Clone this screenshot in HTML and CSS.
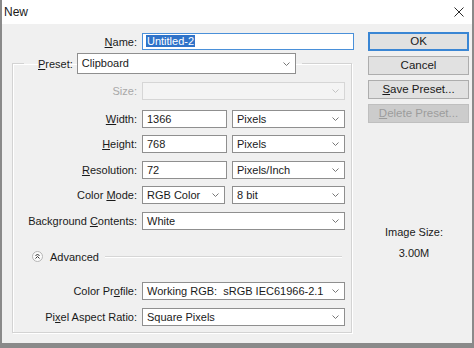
FILE: index.html
```html
<!DOCTYPE html>
<html>
<head>
<meta charset="utf-8">
<link rel="stylesheet" href="styles.css">
</head>
<body>
<div class="window">
  <div class="titlebar">
    <span class="title">New</span>
    <svg class="close" width="10" height="10" viewBox="0 0 10 10"><path d="M0.5 0.5 L9.5 9.5 M9.5 0.5 L0.5 9.5" stroke="#2b2b2b" stroke-width="1" fill="none"/></svg>
  </div>
  <div class="client">
    <div class="main">
      <div class="name-row">
        <span class="lbl"><u>N</u>ame:</span>
        <div class="field name-field"><span class="selected">Untitled-2</span></div>
      </div>
      <fieldset class="group">
        <legend class="legend">
          <span class="legend-lbl"><u>P</u>reset:</span>
          <div class="field select preset"><span>Clipboard</span><svg width="7" height="4" viewBox="0 0 7 4"><path d="M0.5 0.5 L3.5 3.5 L6.5 0.5" fill="none" stroke="#777"/></svg></div>
        </legend>
        <div class="grid">
          <span class="lbl disabled first">Size:</span>
          <div class="field select wide is-disabled first"><span></span><svg width="7" height="4" viewBox="0 0 7 4"><path d="M0.5 0.5 L3.5 3.5 L6.5 0.5" fill="none" stroke="#c4c4c4"/></svg></div>

          <span class="lbl"><u>W</u>idth:</span>
          <div class="field">1366</div>
          <div class="field select"><span>Pixels</span><svg width="7" height="4" viewBox="0 0 7 4"><path d="M0.5 0.5 L3.5 3.5 L6.5 0.5" fill="none" stroke="#777"/></svg></div>

          <span class="lbl"><u>H</u>eight:</span>
          <div class="field">768</div>
          <div class="field select"><span>Pixels</span><svg width="7" height="4" viewBox="0 0 7 4"><path d="M0.5 0.5 L3.5 3.5 L6.5 0.5" fill="none" stroke="#777"/></svg></div>

          <span class="lbl"><u>R</u>esolution:</span>
          <div class="field">72</div>
          <div class="field select"><span>Pixels/Inch</span><svg width="7" height="4" viewBox="0 0 7 4"><path d="M0.5 0.5 L3.5 3.5 L6.5 0.5" fill="none" stroke="#777"/></svg></div>

          <span class="lbl">Color <u>M</u>ode:</span>
          <div class="field select narrow"><span>RGB Color</span><svg width="7" height="4" viewBox="0 0 7 4"><path d="M0.5 0.5 L3.5 3.5 L6.5 0.5" fill="none" stroke="#777"/></svg></div>
          <div class="field select"><span>8 bit</span><svg width="7" height="4" viewBox="0 0 7 4"><path d="M0.5 0.5 L3.5 3.5 L6.5 0.5" fill="none" stroke="#777"/></svg></div>

          <span class="lbl">Background <u>C</u>ontents:</span>
          <div class="field select wide"><span>White</span><svg width="7" height="4" viewBox="0 0 7 4"><path d="M0.5 0.5 L3.5 3.5 L6.5 0.5" fill="none" stroke="#777"/></svg></div>
        </div>

        <div class="advanced">
          <svg class="adv-icon" width="11" height="11" viewBox="0 0 11 11"><circle cx="5.5" cy="5.5" r="5" fill="#fafafa" stroke="#b5b5b5"/><path d="M3.5 5 L5.5 3 L7.5 5 M3.5 7.5 L5.5 5.5 L7.5 7.5" fill="none" stroke="#333" stroke-width="1"/></svg>
          <span class="adv-text">Advanced</span>
          <span class="adv-line"></span>
        </div>

        <div class="grid grid-adv">
          <span class="lbl">Color Pr<u>o</u>file:</span>
          <div class="field select wide"><span>Working RGB:&nbsp; sRGB IEC61966-2.1</span><svg width="7" height="4" viewBox="0 0 7 4"><path d="M0.5 0.5 L3.5 3.5 L6.5 0.5" fill="none" stroke="#777"/></svg></div>

          <span class="lbl">Pi<u>x</u>el Aspect Ratio:</span>
          <div class="field select wide"><span>Square Pixels</span><svg width="7" height="4" viewBox="0 0 7 4"><path d="M0.5 0.5 L3.5 3.5 L6.5 0.5" fill="none" stroke="#777"/></svg></div>
        </div>
      </fieldset>
    </div>
    <div class="side">
      <div class="btn default">OK</div>
      <div class="btn">Cancel</div>
      <div class="btn"><u>S</u>ave Preset...</div>
      <div class="btn disabled-btn"><u>D</u>elete Preset...</div>
      <div class="imgsize">
        <div>Image Size:</div>
        <div class="imgsize-val">3.00M</div>
      </div>
    </div>
  </div>
</div>
</body>
</html>
```

FILE: styles.css
```css
* { box-sizing: border-box; }
html, body { margin: 0; padding: 0; }
body {
  width: 474px;
  height: 348px;
  overflow: hidden;
  font-family: "Liberation Sans", Arial, sans-serif;
  font-size: 11px;
  color: #1a1a1a;
  background: #8c8c8c;
}
u { text-decoration: underline; text-underline-offset: 1px; }

.window {
  width: 474px;
  height: 348px;
  border-left: 2px solid #8a8a8a;
  border-right: 2px solid #8a8a8a;
  border-bottom: 5px solid #8a8a8a;
  display: flex;
  flex-direction: column;
  background: #f0f0f0;
}

.titlebar {
  height: 24px;
  background: #ffffff;
  display: flex;
  align-items: center;
  justify-content: space-between;
  padding: 0 8px 0 2px;
}
.title { font-size: 12px; color: #1a1a1a; }
.close { display: block; }

.client {
  flex: 1;
  display: flex;
  padding: 8px 0 0 10px;
}

.main {
  width: 344px;
  padding-top: 1px;
}

.name-row {
  display: flex;
  align-items: center;
  gap: 5px;
}
.name-row .lbl { width: 125px; }

.lbl {
  text-align: right;
  white-space: nowrap;
  color: #1a1a1a;
}
.lbl.disabled { color: #a8a8a8; }

.field {
  height: 18px;
  background: #fff;
  border: 1px solid #8f8f8f;
  padding: 0 4px;
  line-height: 16px;
  white-space: nowrap;
  color: #1a1a1a;
}
.name-field {
  width: 212px;
  height: 17px;
  line-height: 15px;
  border-color: #4a90d9;
  padding-left: 3px;
}
.selected {
  background: #2f73c9;
  color: #fff;
  padding: 0 1px;
}

.select {
  display: flex;
  align-items: center;
  justify-content: space-between;
  padding-right: 5px;
}
.select svg { flex: none; }
.is-disabled {
  background: #f4f4f4;
  border-color: #d6d6d6;
}

.group {
  margin: 3px 0 0 0;
  padding: 8px 6px 6px 0;
  width: 340px;
  border: 1px solid #d3d3d3;
  box-shadow: inset 1px 1px 0 #ffffff, 1px 1px 0 #ffffff;
  min-width: 0;
}
.legend {
  margin-left: 11px;
  padding: 0 6px 0 14px;
  display: flex;
  align-items: center;
  gap: 4px;
}
.preset {
  width: 219px;
  height: 21px;
  line-height: 19px;
}

.grid {
  display: grid;
  grid-template-columns: 124px 85px 113px;
  column-gap: 5px;
  row-gap: 7.5px;
  align-items: center;
}
.grid .first { margin-bottom: 2px; }
.grid .wide { grid-column: 2 / span 2; }
.grid .narrow { width: 83px; }

.advanced {
  display: flex;
  align-items: center;
  height: 14px;
  margin-top: 20px;
  padding-left: 19px;
}
.adv-icon { display: block; flex: none; }
.adv-text { margin-left: 7px; }
.adv-line {
  flex: none;
  width: 237px;
  margin-left: 6px;
  height: 2px;
  border-top: 1px solid #d6d6d6;
  border-bottom: 1px solid #ffffff;
}

.grid-adv { margin-top: 18px; row-gap: 8px; }

.side {
  margin-left: 12px;
  width: 101px;
  display: flex;
  flex-direction: column;
  gap: 5px;
}
.btn {
  height: 19px;
  background: #e1e1e1;
  border: 1px solid #adadad;
  text-align: center;
  line-height: 17px;
  color: #1a1a1a;
  font-size: 11.5px;
}
.btn.default {
  border: 2px solid #3a86d4;
  line-height: 15px;
}
.disabled-btn {
  background: #cccccc;
  border-color: #bfbfbf;
  color: #9c9c9c;
}

.imgsize {
  margin-top: 97px;
  text-align: center;
  padding-right: 9px;
  line-height: 14px;
}
.imgsize-val { margin-top: 7px; }
```
